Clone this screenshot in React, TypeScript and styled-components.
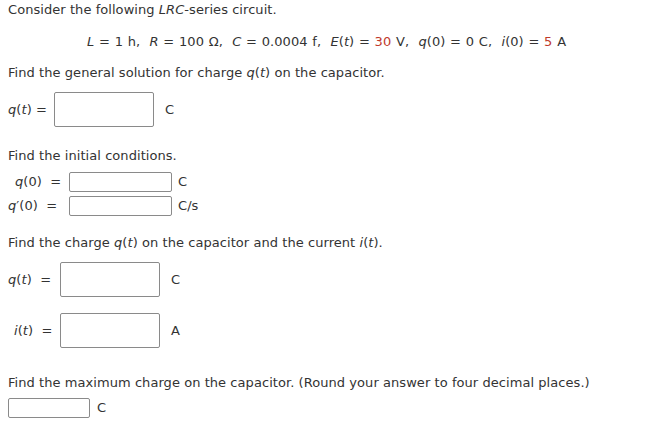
import React from 'react';
import styled, { createGlobalStyle } from 'styled-components';

const GlobalStyle = createGlobalStyle`
  html, body {
    margin: 0;
    padding: 0;
    background: #ffffff;
  }
  body {
    font-family: 'DejaVu Sans', Verdana, sans-serif;
    font-size: 13px;
    letter-spacing: 0.06px;
    color: #333333;
  }
`;

const Page = styled.div`
  width: 669px;
  height: 433px;
  padding: 2px 8px 0 8px;
  box-sizing: border-box;
  overflow: hidden;
`;

const Text = styled.p<{ $top?: number; $indent?: number; $wide?: boolean }>`
  margin: ${(p) => p.$top ?? 0}px 0 0 ${(p) => p.$indent ?? 0}px;
  line-height: 16px;
  height: 16px;
  white-space: nowrap;
  word-spacing: ${(p) => (p.$wide ? '0.5px' : 'normal')};
`;

const Var = styled.i`
  font-style: italic;
`;

const Red = styled.span`
  color: #c0392b;
`;

const Row = styled.div<{ $top?: number; $indent?: number; $labelWidth: number }>`
  display: grid;
  grid-template-columns: ${(p) => p.$labelWidth}px auto auto;
  align-items: center;
  justify-content: start;
  line-height: 16px;
  margin: ${(p) => p.$top ?? 0}px 0 0 ${(p) => p.$indent ?? 0}px;
`;

const Label = styled.span`
  white-space: nowrap;
`;

const Box = styled.div<{ $w: number; $h: number }>`
  width: ${(p) => p.$w}px;
  height: ${(p) => p.$h}px;
  box-sizing: border-box;
  border: 1px solid #8a8a8a;
  border-radius: 2px;
  background: #fff;
`;

const Unit = styled.span<{ $gap: number }>`
  margin-left: ${(p) => p.$gap}px;
`;

export default function App() {
  return (
    <>
      <GlobalStyle />
      <Page>
        <Text>
          Consider the following <Var>LRC</Var>-series circuit.
        </Text>
        <Text $top={16} $indent={79} $wide>
          <Var>L</Var> = 1 h,&nbsp; <Var>R</Var> = 100 Ω,&nbsp; <Var>C</Var> = 0.0004 f,&nbsp;{' '}
          <Var>E</Var>(<Var>t</Var>) = <Red>30</Red> V,&nbsp; <Var>q</Var>(0) = 0 C,&nbsp;{' '}
          <Var>i</Var>(0) = <Red>5</Red> A
        </Text>
        <Text $top={15}>
          Find the general solution for charge <Var>q</Var>(<Var>t</Var>) on the capacitor.
        </Text>
        <Row $top={11} $labelWidth={46}>
          <Label>
            <Var>q</Var>(<Var>t</Var>) =
          </Label>
          <Box $w={100} $h={35} />
          <Unit $gap={11}>C</Unit>
        </Row>
        <Text $top={21}>Find the initial conditions.</Text>
        <Row $top={8} $indent={7} $labelWidth={54}>
          <Label>
            <Var>q</Var>(0)&nbsp; =
          </Label>
          <Box $w={103} $h={20} />
          <Unit $gap={6}>C</Unit>
        </Row>
        <Row $top={4} $labelWidth={61}>
          <Label>
            <Var>q</Var>′(0)&nbsp; =
          </Label>
          <Box $w={103} $h={20} />
          <Unit $gap={6}>C/s</Unit>
        </Row>
        <Text $top={19}>
          Find the charge <Var>q</Var>(<Var>t</Var>) on the capacitor and the current{' '}
          <Var>i</Var>(<Var>t</Var>).
        </Text>
        <Row $top={11} $labelWidth={52}>
          <Label>
            <Var>q</Var>(<Var>t</Var>)&nbsp; =
          </Label>
          <Box $w={100} $h={35} />
          <Unit $gap={11}>C</Unit>
        </Row>
        <Row $top={16} $indent={6} $labelWidth={46}>
          <Label>
            <Var>i</Var>(<Var>t</Var>)&nbsp; =
          </Label>
          <Box $w={100} $h={35} />
          <Unit $gap={11}>A</Unit>
        </Row>
        <Text $top={27}>
          Find the maximum charge on the capacitor. (Round your answer to four decimal places.)
        </Text>
        <Row $top={7} $labelWidth={0}>
          <span />
          <Box $w={82} $h={20} />
          <Unit $gap={7}>C</Unit>
        </Row>
      </Page>
    </>
  );
}
